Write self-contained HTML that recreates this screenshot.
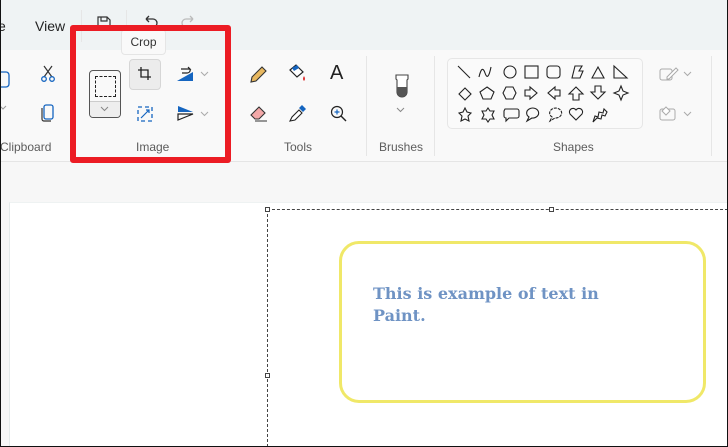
<!DOCTYPE html>
<html style="overflow:hidden"><head><meta charset="utf-8"><style>
*{margin:0;padding:0;box-sizing:border-box}
html,body{width:728px;height:447px;overflow:hidden}
body{font-family:"Liberation Sans",sans-serif;position:relative;background:#f7f7f7}
.a{position:absolute}
.top{left:0;top:0;width:728px;height:50px;background:#eff3f4}
.rib{left:0;top:50px;width:728px;height:112px;background:#f9f9f9;border-bottom:1px solid #e5e5e5}
.lbl{font-size:12px;color:#5c5c5c}
.sep{width:1px;background:#e6e6e6}
svg{position:absolute;overflow:visible}
</style></head><body>
<div class="a top"></div>
<div class="a rib"></div>
<div class="a" style="left:-2px;top:18px;font-size:14px;color:#222">e</div>
<div class="a" style="left:35px;top:18px;font-size:14px;color:#222">View</div>
<div class="a sep" style="left:81px;top:10px;height:32px"></div>
<div class="a sep" style="left:126px;top:10px;height:32px"></div>
<svg style="left:96px;top:16px" width="16" height="16"><path d="M2 1h9l3 3v10H2z M5 1v4h6V1 M5 14v-4h6v4" fill="none" stroke="#333" stroke-width="1.2"/></svg>
<svg style="left:143px;top:15px" width="16" height="16"><path d="M3 4h7a4 4 0 0 1 0 8H6 M3 4l3-3 M3 4l3 3" fill="none" stroke="#333" stroke-width="1.3"/></svg>
<svg style="left:180px;top:15px" width="16" height="16"><path d="M13 4H6a4 4 0 0 0 0 8h4 M13 4l-3-3 M13 4l-3 3" fill="none" stroke="#bbb" stroke-width="1.3"/></svg>
<div class="a" style="left:121px;top:29px;width:45px;height:26px;background:#f9f9f9;border:1px solid #e5e5e5;border-radius:4px;font-size:12px;color:#333;text-align:center;line-height:24px">Crop</div>
<svg style="left:0;top:66px" width="14" height="22"><path d="M-4 6h10a3 3 0 0 1 3 3v9a3 3 0 0 1-3 3H-4" fill="none" stroke="#1565c0" stroke-width="1.3"/></svg>
<svg style="left:0;top:104px" width="10" height="8"><path d="M0 2l3 3 3-3" fill="none" stroke="#999"/></svg>
<svg style="left:40px;top:65px" width="16" height="18"><path d="M4 1l8 11 M12 1L4 12" stroke="#333" stroke-width="1.2"/><circle cx="4" cy="14" r="2.3" fill="none" stroke="#1565c0" stroke-width="1.3"/><circle cx="12" cy="14" r="2.3" fill="none" stroke="#1565c0" stroke-width="1.3"/></svg>
<svg style="left:41px;top:104px" width="14" height="18"><rect x="3" y="1" width="9" height="14" rx="2" fill="none" stroke="#1565c0" stroke-width="1.3"/><path d="M1 4v11a2 2 0 0 0 2 2h7" fill="none" stroke="#333" stroke-width="1.2"/></svg>
<div class="a lbl" style="left:0;top:140px">Clipboard</div>
<div class="a" style="left:89px;top:70px;width:32px;height:48px;border:1px solid #555;border-radius:4px;background:#f9f9f9"></div>
<div class="a" style="left:90px;top:101px;width:30px;height:16px;background:#eee;border-top:1px solid #ccc;border-radius:0 0 3px 3px"></div>
<div class="a" style="left:95px;top:76px;width:21px;height:21px;border:1.5px dashed #222"></div>
<svg style="left:101px;top:107px" width="8" height="5"><path d="M0 0l3.5 3.5L7 0" fill="none" stroke="#888"/></svg>
<div class="a" style="left:129px;top:59px;width:32px;height:31px;background:#ececec;border:1px solid #d6d6d6;border-radius:4px"></div>
<svg style="left:137px;top:66px" width="16" height="16"><path d="M4 1v10h10 M1 4h10v10" fill="none" stroke="#222" stroke-width="1.3"/></svg>
<svg style="left:137px;top:106px" width="16" height="16"><rect x="1" y="1" width="14" height="14" fill="none" stroke="#1565c0" stroke-width="1.3" stroke-dasharray="4 3"/><path d="M4 12l8-8 M9 4h3v3" fill="none" stroke="#1565c0" stroke-width="1.2"/></svg>
<svg style="left:177px;top:66px" width="18" height="16"><path d="M0 15L16 6v9z" fill="#1565c0"/><path d="M4 3h9l-2-2 M13 3a3 3 0 0 1-3 4H5" fill="none" stroke="#222" stroke-width="1.2"/></svg>
<svg style="left:201px;top:72px" width="8" height="5"><path d="M0 0l3.5 3.5L7 0" fill="none" stroke="#aaa"/></svg>
<svg style="left:177px;top:105px" width="18" height="16"><path d="M1 1l15 6H1z" fill="#1565c0"/><path d="M1 9h15L1 15z" fill="none" stroke="#222" stroke-width="1.2"/></svg>
<svg style="left:201px;top:112px" width="8" height="5"><path d="M0 0l3.5 3.5L7 0" fill="none" stroke="#aaa"/></svg>
<div class="a lbl" style="left:136px;top:140px">Image</div>
<svg style="left:249px;top:64px" width="20" height="20"><path d="M2 18l1-5L13 3l4 4L7 17z" fill="#e8b860" stroke="#333" stroke-width="1.1"/></svg>
<svg style="left:288px;top:64px" width="20" height="20"><path d="M2 6l6-5 7 7-6 5z" fill="#fff" stroke="#222" stroke-width="1.2"/><path d="M4 4l5-3 2 3-5 3z" fill="#1565c0"/><path d="M16 12q2 3 0 5q-2-2 0-5" fill="#d33"/></svg>
<div class="a" style="left:330px;top:62px;font-size:20px;color:#222">A</div>
<svg style="left:249px;top:104px" width="20" height="18"><path d="M2 11l8-8 6 6-6 6H6z" fill="#f2a8a8" stroke="#333" stroke-width="1.1"/><path d="M6 17h12" stroke="#333"/></svg>
<svg style="left:289px;top:104px" width="18" height="18"><path d="M1 17l2-4 7-7 3 3-7 7z" fill="#fff" stroke="#222" stroke-width="1.1"/><path d="M10 4l3-3 4 4-3 3z" fill="#1565c0"/></svg>
<svg style="left:330px;top:105px" width="18" height="18"><circle cx="7" cy="7" r="5.5" fill="none" stroke="#222" stroke-width="1.2"/><path d="M11 11l5 5" stroke="#222" stroke-width="1.4"/><path d="M4.5 7h5M7 4.5v5" stroke="#1565c0" stroke-width="1.2"/></svg>
<div class="a lbl" style="left:284px;top:140px">Tools</div>
<div class="a sep" style="left:366px;top:56px;height:100px"></div>
<svg style="left:394px;top:74px" width="16" height="24"><path d="M2 1h12v4l-1 1v12a5 5 0 0 1-10 0V6L2 5z" fill="#fff" stroke="#444" stroke-width="1.1"/><path d="M3 13h10v5a5 5 0 0 1-10 0z" fill="#555"/></svg>
<svg style="left:397px;top:108px" width="8" height="5"><path d="M0 0l3.5 3.5L7 0" fill="none" stroke="#888"/></svg>
<div class="a lbl" style="left:379px;top:140px">Brushes</div>
<div class="a sep" style="left:434px;top:56px;height:100px"></div>
<div class="a" style="left:447px;top:58px;width:196px;height:71px;border:1px solid #e6e6e6;border-radius:5px;background:#fafafa"></div>
<svg style="left:455px;top:64px" width="180" height="60" fill="none" stroke="#222" stroke-width="1.1">
<path d="M3 2l12 12"/>
<path d="M24 13q3-13 6-4t6-6"/>
<circle cx="55" cy="8" r="6"/>
<rect x="70" y="2" width="13" height="12"/>
<rect x="92" y="2" width="13" height="12" rx="3"/>
<path d="M117 14l3-12h7l-3 5h4l-3 7z"/>
<path d="M137 14l6-11 6 11z"/>
<path d="M159 2v12h13z"/>
<path d="M4 30l6-6 6 6-6 6z"/>
<path d="M32 23l7 5-3 7h-8l-3-7z"/>
<path d="M51 23h7l3 6-3 6h-7l-3-6z"/>
<path d="M70 26h5v-3l7 6-7 6v-3h-5z"/>
<path d="M105 26h-5v-3l-7 6 7 6v-3h5z"/>
<path d="M118 36v-6h-4l7-7 7 7h-4v6z"/>
<path d="M140 22v6h-4l7 7 7-7h-4v-6z"/>
<path d="M166 22l2 5 5 2-5 2-2 5-2-5-5-2 5-2z"/>
<path d="M10 44l2 4 4 1-3 3 1 5-4-2-4 2 1-5-3-3 4-1z"/>
<path d="M33 44l2 3h4l-2 4 2 4h-4l-2 3-2-3h-4l2-4-2-4h4z"/>
<path d="M50 45h12a2 2 0 0 1 2 2v5a2 2 0 0 1-2 2h-8l-3 3v-3a2 2 0 0 1-2-2v-5z"/>
<path d="M72 57l2-4a6 5 0 1 1 3 1z"/>
<path d="M95 57l2-4a6 5 0 1 1 3 1z" stroke-dasharray="3 1"/>
<path d="M121 56l-6-6a3.5 3.5 0 0 1 6-4a3.5 3.5 0 0 1 6 4z"/>
<path d="M138 58l2-6 3 1 1-5 4 1 1-4 3 3-2 4-3-1-1 4-4-1z"/>
</svg>
<div class="a lbl" style="left:553px;top:140px">Shapes</div>
<svg style="left:659px;top:66px" width="20" height="16"><rect x="1" y="3" width="12" height="11" rx="2" fill="none" stroke="#aaa"/><path d="M8 11l9-9 2 2-9 9H8z" fill="#fff" stroke="#aaa"/></svg>
<svg style="left:684px;top:72px" width="8" height="5"><path d="M0 0l3.5 3.5L7 0" fill="none" stroke="#aaa"/></svg>
<svg style="left:659px;top:106px" width="20" height="16"><rect x="1" y="3" width="15" height="11" rx="2" fill="none" stroke="#aaa"/><path d="M3 5l4-4 4 4-4 4z" fill="#fff" stroke="#aaa"/></svg>
<svg style="left:684px;top:112px" width="8" height="5"><path d="M0 0l3.5 3.5L7 0" fill="none" stroke="#aaa"/></svg>
<div class="a sep" style="left:711px;top:56px;height:100px"></div>
<div class="a" style="left:70px;top:25px;width:161px;height:138px;border:6px solid #ec1c24;border-radius:3px"></div>
<div class="a" style="left:9px;top:202px;width:719px;height:245px;background:#fff;border-left:1px solid #e4eaea;border-top:1px solid #eef2f2"></div>
<div class="a" style="left:267px;top:209px;width:461px;height:238px;border-left:1px dashed #444;border-top:1px dashed #444"></div>
<div class="a" style="left:265px;top:207px;width:5px;height:5px;border:1px solid #444;background:#fff"></div>
<div class="a" style="left:549px;top:207px;width:5px;height:5px;border:1px solid #444;background:#fff"></div>
<div class="a" style="left:265px;top:373px;width:5px;height:5px;border:1px solid #444;background:#fff"></div>
<div class="a" style="left:339px;top:241px;width:367px;height:162px;border:3px solid #f0e868;border-radius:20px"></div>
<div class="a" style="left:373px;top:283px;font-family:'DejaVu Serif',serif;font-weight:bold;font-size:16px;line-height:22px;color:#6f93c4;white-space:nowrap">This is example of text in<br>Paint.</div>
<div class="a" style="left:0;top:0;width:728px;height:447px;border:1px solid #111;border-top:none;pointer-events:none"></div>
</body></html>
